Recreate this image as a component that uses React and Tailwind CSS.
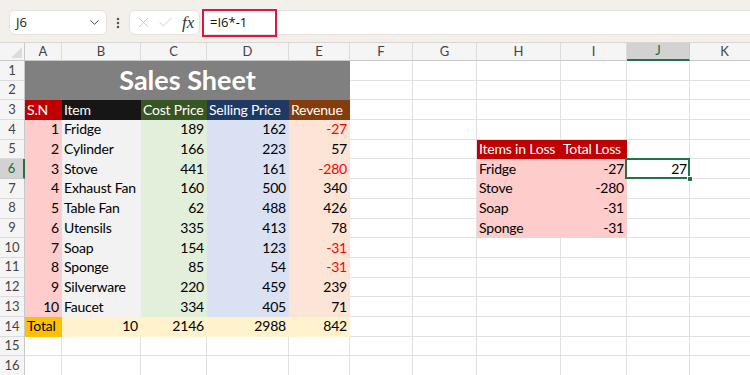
import React from 'react';
import { ChevronDown, EllipsisVertical, X, Check } from 'lucide-react';

const font = { fontFamily: 'Lato, "Open Sans", sans-serif' };

const Cell = ({ children, className = '' }) => (
  <div
    className={`border-r border-b border-[#e1e1e1] text-[14px] tracking-[-0.2px] leading-none flex items-center px-[2px] overflow-hidden whitespace-nowrap text-black ${className}`}
  >
    {children}
  </div>
);

const RowHead = ({ n, active }) => (
  <div
    className={`flex items-center justify-center text-[13px] border-b ${
      active
        ? 'bg-[#d2d2d2] text-[#1d6b3e] border-r-2 border-r-[#217346] border-b-[#c8c8c8]'
        : 'bg-[#f5f5f5] text-[#444] border-r border-r-[#c8c8c8] border-b-[#dcdcdc]'
    }`}
  >
    {n}
  </div>
);

const Empty = ({ n }) =>
  Array.from({ length: n }).map((_, i) => <Cell key={i} />);

const sales = [
  [1, 'Fridge', 189, 162, -27],
  [2, 'Cylinder', 166, 223, 57],
  [3, 'Stove', 441, 161, -280],
  [4, 'Exhaust Fan', 160, 500, 340],
  [5, 'Table Fan', 62, 488, 426],
  [6, 'Utensils', 335, 413, 78],
  [7, 'Soap', 154, 123, -31],
  [8, 'Sponge', 85, 54, -31],
  [9, 'Silverware', 220, 459, 239],
  [10, 'Faucet', 334, 405, 71],
];

const losses = {
  6: ['Fridge', -27],
  7: ['Stove', -280],
  8: ['Soap', -31],
  9: ['Sponge', -31],
};

const cols = ['A', 'B', 'C', 'D', 'E', 'F', 'G', 'H', 'I', 'J', 'K'];

const App = () => {
  return (
    <div className="w-[750px] h-[375px] overflow-hidden bg-white" style={font}>
      {/* Formula bar */}
      <div className="h-[43px] bg-[#f3efea] border-b border-[#dad6d1] flex items-start pt-[10px] pl-[9px]">
        <div className="w-[98px] h-[25px] bg-white rounded-md border border-[#e6e2dd] flex items-center justify-between pl-[6px] pr-[4px]">
          <span className="text-[13px] text-[#222]" style={{ fontFamily: '"Open Sans", sans-serif' }}>J6</span>
          <ChevronDown size={15} strokeWidth={1.6} className="text-[#444]" />
        </div>
        <div className="w-[22px] h-[25px] flex items-center justify-center">
          <EllipsisVertical size={14} strokeWidth={2.4} className="text-[#555]" />
        </div>
        <div className="w-[71px] h-[25px] bg-white rounded-md border border-[#e6e2dd] flex items-center pl-[5px] gap-[5px]">
          <X size={17} strokeWidth={1.2} className="text-[#c4c4c4]" />
          <Check size={17} strokeWidth={1.2} className="text-[#c4c4c4]" />
          <span
            className="text-[17px] italic text-[#333] ml-[3px] leading-none"
            style={{ fontFamily: '"Liberation Serif", serif' }}
          >
            fx
          </span>
        </div>
        <div className="flex-1 h-[25px] bg-white border-y border-[#e6e2dd] ml-[3px] flex items-center">
          <div className="w-[75px] h-[28px] -ml-[1px] border-2 border-[#e0163f] flex items-center pl-[6px] text-[13px] text-[#111]" style={{ fontFamily: '"Open Sans", sans-serif' }}>
            =I6*-1
          </div>
        </div>
      </div>

      {/* Grid */}
      <div className="grid grid-cols-[25px_37px_79px_66px_82px_61px_63px_64px_84px_66px_63px_70px] grid-rows-[18px] auto-rows-[19.7px]">
        {/* Column headers */}
        <div className="bg-[#f5f5f5] border-r border-b border-[#c8c8c8] relative">
          <div className="absolute right-[2px] bottom-[2px] w-0 h-0 border-l-[11px] border-l-transparent border-b-[11px] border-b-[#dcdcdc]" />
        </div>
        {cols.map((c) =>
          c === 'J' ? (
            <div key={c} className="bg-[#d2d2d2] text-[#1d6b3e] text-[13px] flex items-center justify-center border-r border-[#c8c8c8] border-b-2 border-b-[#217346]">
              {c}
            </div>
          ) : (
            <div key={c} className="bg-[#f5f5f5] text-[#444] text-[13px] flex items-center justify-center border-r border-[#dcdcdc] border-b border-b-[#c8c8c8]">
              {c}
            </div>
          )
        )}

        {/* Row 1-2 with title */}
        <RowHead n={1} />
        <div className="col-span-5 row-span-2 bg-[#808080] flex items-center justify-center text-white font-bold text-[27px] border-b border-[#808080]">
          Sales Sheet
        </div>
        <Empty n={6} />
        <RowHead n={2} />
        <Empty n={6} />

        {/* Row 3 headers */}
        <RowHead n={3} />
        <Cell className="bg-[#c00000] !border-transparent text-white">S.N</Cell>
        <Cell className="bg-[#161616] !border-transparent text-white">Item</Cell>
        <Cell className="bg-[#375623] !border-transparent text-white">Cost Price</Cell>
        <Cell className="bg-[#1f3864] !border-transparent text-white">Selling Price</Cell>
        <Cell className="bg-[#843c0c] !border-transparent text-white">Revenue</Cell>
        <Empty n={6} />

        {/* Data rows 4-13 */}
        {sales.map(([sn, item, cost, sell, rev], i) => {
          const r = i + 4;
          const loss = losses[r];
          return (
            <React.Fragment key={r}>
              <RowHead n={r} active={r === 6} />
              <Cell className="bg-[#ffcccc] !border-transparent justify-end">{sn}</Cell>
              <Cell className="bg-[#f2f2f2] !border-transparent">{item}</Cell>
              <Cell className="bg-[#e2efda] !border-transparent justify-end">{cost}</Cell>
              <Cell className="bg-[#d9e1f2] !border-transparent justify-end">{sell}</Cell>
              <Cell className={`bg-[#fce4d6] !border-transparent justify-end ${rev < 0 ? '!text-[#ff0000]' : ''}`}>{rev}</Cell>
              <Cell />
              <Cell />
              {r === 5 ? (
                <>
                  <Cell className="bg-[#c00000] !border-transparent text-white">Items in Loss</Cell>
                  <Cell className="bg-[#c00000] !border-transparent text-white">Total Loss</Cell>
                </>
              ) : loss ? (
                <>
                  <Cell className="bg-[#ffcccc] !border-transparent">{loss[0]}</Cell>
                  <Cell className="bg-[#ffcccc] !border-transparent justify-end">{loss[1]}</Cell>
                </>
              ) : (
                <Empty n={2} />
              )}
              {r === 6 ? (
                <div className="relative border-r border-b border-[#e1e1e1] text-[14px] tracking-[-0.2px] flex items-center justify-end px-[2px]">
                  27
                  <div className="absolute -left-[2px] -top-[1px] -right-[1px] -bottom-[1px] border-2 border-[#217346]" />
                  <div className="absolute -right-[4px] -bottom-[4px] w-[6px] h-[6px] bg-[#217346] border border-white" />
                </div>
              ) : (
                <Cell />
              )}
              <Cell />
            </React.Fragment>
          );
        })}

        {/* Row 14 totals */}
        <RowHead n={14} />
        <Cell className="bg-[#ffc000] !border-transparent">Total</Cell>
        <Cell className="bg-[#fff2cc] !border-transparent justify-end">10</Cell>
        <Cell className="bg-[#fff2cc] !border-transparent justify-end">2146</Cell>
        <Cell className="bg-[#fff2cc] !border-transparent justify-end">2988</Cell>
        <Cell className="bg-[#fff2cc] !border-transparent justify-end">842</Cell>
        <Empty n={6} />

        <RowHead n={15} />
        <Empty n={11} />
        <RowHead n={16} />
        <Empty n={11} />
      </div>
    </div>
  );
};

export default App;
